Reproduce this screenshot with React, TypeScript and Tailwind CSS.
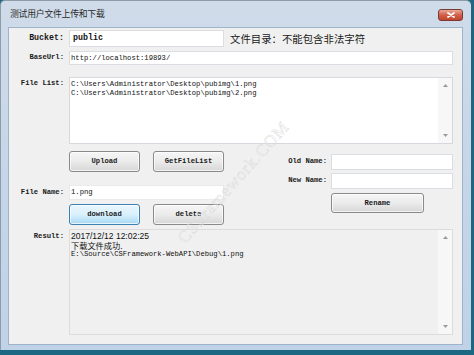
const mono = "font-['Liberation_Mono','Courier_New',monospace]";
const cjk = "font-['Noto_Sans_CJK_SC','Noto_Sans',sans-serif]";

function Label({ children, w = 'w-[55px]', bold = false }: { children: string; w?: string; bold?: boolean }) {
    return (
        <div className={`${w} shrink-0 text-right ${mono} ${bold ? 'text-[8.3px] font-bold' : 'text-[7.2px] font-bold'} text-[#1a1a1a] leading-none`}>
            {children}
        </div>
    );
}

function Button({ children, w = 'w-[71px]', h = 'h-[21px]', active = false }: { children: string; w?: string; h?: string; active?: boolean }) {
    const skin = active
        ? 'border-[#3c7fb1] bg-gradient-to-b from-[#eaf6fd] via-[#d9f0fc] to-[#a7d9f5]'
        : 'border-[#8a8a8a] bg-gradient-to-b from-[#f6f6f6] via-[#ebebeb] to-[#d6d6d6]';
    return (
        <div className={`${w} ${h} shrink-0 rounded-[3px] border ${skin} flex items-center justify-center ${mono} text-[7.2px] font-bold text-[#1a1a1a] shadow-[inset_0_0_0_1px_rgba(255,255,255,0.7)]`}>
            {children}
        </div>
    );
}

function Scroll() {
    return (
        <div className="w-[14px] shrink-0 flex flex-col items-center justify-between py-[6px] bg-[#f7f7f7]">
            <svg width="5" height="3" viewBox="0 0 5 3"><path d="M0 3 L2.5 0 L5 3 Z" fill="#9a9a9a" /></svg>
            <svg width="5" height="3" viewBox="0 0 5 3"><path d="M0 0 L2.5 3 L5 0 Z" fill="#9a9a9a" /></svg>
        </div>
    );
}

export default function App() {
    return (
        <div className="w-[474px] h-[355px] bg-[#1c6781] relative overflow-hidden">
            <div className="w-[471px] h-[350px] bg-gradient-to-b from-[#cfdbe9] via-[#c6d6e8] to-[#bfd2e7] border-t border-l border-[#8e9caa] rounded-tl-[5px] rounded-tr-[5px] flex flex-col">
                {/* title bar */}
                <div className="h-[26px] shrink-0 flex items-center pl-[9px] pr-[8px]">
                    <span className={`${cjk} text-[8.8px] text-[#2a2a2a] tracking-[-0.2px]`}>测试用户文件上传和下载</span>
                    <div className="ml-auto mt-[1px] w-[25px] h-[12px] rounded-[3px] border border-[#7a3a33] bg-gradient-to-b from-[#e8a898] via-[#d0604a] to-[#c2432c] flex items-center justify-center">
                        <svg width="8" height="6" viewBox="0 0 8 6">
                            <path d="M1 1 L7 5 M7 1 L1 5" stroke="#ffffff" strokeWidth="1.7" strokeLinecap="round" />
                        </svg>
                    </div>
                </div>

                {/* client area */}
                <div className="ml-[7px] mr-[8px] h-[318px] bg-[#f0f0f0] border border-[#9fb3c9] pt-[2px] pr-[9px] relative">
                    {/* Bucket */}
                    <div className="flex items-center h-[17px]">
                        <Label bold>Bucket:</Label>
                        <div className={`ml-[5px] w-[155px] h-[17px] bg-white border border-[#dadde2] flex items-center pl-[3px] ${mono} text-[8.3px] font-bold text-[#111]`}>
                            public
                        </div>
                        <span className={`ml-[6px] ${cjk} text-[10.4px] text-[#1a1a1a]`}>文件目录：不能包含非法字符</span>
                    </div>

                    {/* BaseUrl */}
                    <div className="flex items-center mt-[4px]">
                        <Label>BaseUrl:</Label>
                        <div className={`ml-[5px] flex-1 h-[14px] bg-white border border-[#dadde2] flex items-center pl-[1px] ${mono} text-[7.2px] text-[#111]`}>
                            http://localhost:19893/
                        </div>
                    </div>

                    {/* File List */}
                    <div className="flex items-start mt-[12px]">
                        <div className="pt-[3px]"><Label>File List:</Label></div>
                        <div className="ml-[5px] flex-1 h-[67px] bg-white border border-[#d5d8dc] flex">
                            <div className={`flex-1 pl-[1px] pt-[2px] ${mono} text-[7.2px] leading-[9px] text-[#111]`}>
                                <div>C:\Users\Administrator\Desktop\pubimg\1.png</div>
                                <div>C:\Users\Administrator\Desktop\pubimg\2.png</div>
                            </div>
                            <Scroll />
                        </div>
                    </div>

                    {/* middle section */}
                    <div className="flex mt-[7px]">
                        <div className="w-[215px] shrink-0">
                            <div className="flex gap-[13px] pl-[60px]">
                                <Button>Upload</Button>
                                <Button>GetFileList</Button>
                            </div>
                            <div className="flex items-center mt-[13px]">
                                <Label>File Name:</Label>
                                <div className={`ml-[5px] w-[155px] h-[15px] bg-white border border-[#eaeaea] flex items-center pl-[1px] ${mono} text-[7.2px] text-[#111]`}>
                                    1.png
                                </div>
                            </div>
                            <div className="flex gap-[13px] pl-[60px] mt-[4px]">
                                <Button active>download</Button>
                                <Button>delete</Button>
                            </div>
                        </div>
                        <div className="ml-[55px] flex-1 pt-[3px]">
                            <div className="flex items-center">
                                <Label w="w-[48px]">Old Name:</Label>
                                <div className="ml-[4px] flex-1 h-[16px] bg-white border border-[#dadde2]" />
                            </div>
                            <div className="flex items-center mt-[3px]">
                                <Label w="w-[48px]">New Name:</Label>
                                <div className="ml-[4px] flex-1 h-[16px] bg-white border border-[#dadde2]" />
                            </div>
                            <div className="pl-[52px] mt-[4px]">
                                <Button w="w-[93px]" h="h-[20px]">Rename</Button>
                            </div>
                        </div>
                    </div>

                    {/* Result */}
                    <div className="flex items-start mt-[4px]">
                        <div className="pt-[4px]"><Label>Result:</Label></div>
                        <div className="ml-[5px] flex-1 h-[106px] bg-[#f0f0f0] border border-[#dcdcdc] flex">
                            <div className="flex-1 pl-[1px] pt-[2px] text-[#111]">
                                <div className="font-['Liberation_Sans',Arial,sans-serif] text-[8.5px] leading-[9px]">2017/12/12 12:02:25</div>
                                <div className={`${cjk} text-[8.2px] leading-[9px]`}>下载文件成功.</div>
                                <div className={`${mono} text-[7.2px] leading-[9px]`}>E:\Source\CSFramework-WebAPI\Debug\1.png</div>
                            </div>
                            <Scroll />
                        </div>
                    </div>

                    {/* watermark */}
                    <div className="absolute left-[172px] top-[200px] -rotate-[48deg] origin-left pointer-events-none font-['Liberation_Serif',serif] text-[17px] tracking-[1px] text-transparent [-webkit-text-stroke:0.5px_#dedede] whitespace-nowrap">
                        CSFramework.COM
                    </div>
                </div>
            </div>
        </div>
    );
}
